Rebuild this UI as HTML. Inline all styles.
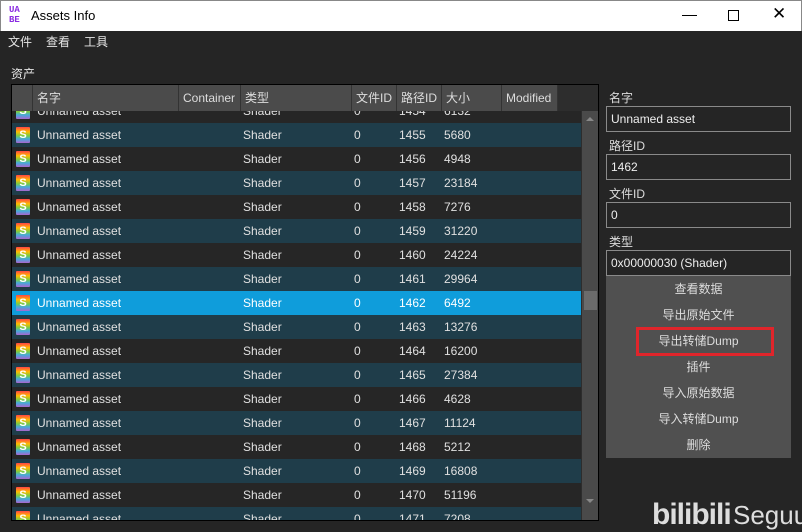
<!DOCTYPE html><html><head><meta charset="utf-8"><style>
*{margin:0;padding:0;box-sizing:border-box}
body{width:802px;height:532px;overflow:hidden;background:#252525;font-family:"Liberation Sans","Noto Sans CJK SC",sans-serif;font-size:12px;color:#e6e6e6;position:relative}
.a{position:absolute}
.title{left:0;top:0;width:802px;height:31px;background:#fff;color:#000;border:1px solid #888;border-bottom:none}
.row{position:absolute;left:0;width:569px;height:24px;line-height:24px}
.row span{position:absolute;top:0}
.ic{position:absolute;left:4px;top:4px;width:14px;height:16px;background:linear-gradient(180deg,#f44 0,#fb0 30%,#7c4 55%,#4ad 75%,#a6c 100%);border-radius:1px;color:#fff;font-weight:bold;font-size:11px;line-height:16px;text-align:center}
.hd{position:absolute;top:0;height:26px;line-height:26px;background:#4b4b4b;border-right:1px solid #333;padding-left:4px;color:#ddd;font-size:12px}
.lbl{position:absolute;left:609px;font-size:12px;color:#ddd}
.in{position:absolute;left:606px;width:185px;height:26px;border:1px solid #8a8a8a;background:#252525;line-height:24px;padding-left:4px;color:#eee}
.btn{position:absolute;left:606px;width:185px;text-align:center;color:#ddd;height:26px;line-height:26px}
</style></head><body>
<div class="a title">
<div class="a" style="left:8px;top:4px;width:14px;height:20px;color:#8a2be2;font-size:9px;line-height:10px;font-family:'Liberation Mono',monospace;font-weight:bold">UA<br>BE</div>
<div class="a" style="left:30px;top:7px;font-size:13px">Assets Info</div>
<div class="a" style="left:681px;top:14px;width:15px;height:1px;background:#000"></div>
<div class="a" style="left:727px;top:9px;width:11px;height:11px;border:1px solid #000"></div>
<div class="a" style="left:771px;top:3px;font-size:17px">&#10005;</div>
</div>
<div class="a" style="left:8px;top:33px;font-size:12px">文件</div>
<div class="a" style="left:46px;top:33px">查看</div>
<div class="a" style="left:84px;top:33px">工具</div>
<div class="a" style="left:11px;top:65px">资产</div>
<div class="a" style="left:11px;top:84px;width:588px;height:437px;border:1px solid #000;background:#2d2d2d;overflow:hidden">
 <div class="a" style="left:0;top:26px;width:570px;height:410px;overflow:hidden">
 <div id="rows"></div>
 </div>
 <div class="hd" style="left:0;width:21px"></div>
 <div class="hd" style="left:21px;width:146px">名字</div>
 <div class="hd" style="left:167px;width:62px">Container</div>
 <div class="hd" style="left:229px;width:111px">类型</div>
 <div class="hd" style="left:340px;width:45px">文件ID</div>
 <div class="hd" style="left:385px;width:45px">路径ID</div>
 <div class="hd" style="left:430px;width:60px">大小</div>
 <div class="hd" style="left:490px;width:56px">Modified</div>
 <div class="a" style="left:570px;top:26px;width:16px;height:410px;background:#4a4a4a"></div>
 <div class="a" style="left:574px;top:32px;border:4px solid transparent;border-bottom:4px solid #888;border-top:none"></div>
 <div class="a" style="left:574px;top:414px;border:4px solid transparent;border-top:4px solid #888;border-bottom:none"></div>
 <div class="a" style="left:572px;top:206px;width:13px;height:19px;background:#6b6b6b"></div>
</div>
<div class="lbl" style="top:89px">名字</div>
<div class="in" style="top:106px">Unnamed asset</div>
<div class="lbl" style="top:137px">路径ID</div>
<div class="in" style="top:154px">1462</div>
<div class="lbl" style="top:185px">文件ID</div>
<div class="in" style="top:202px">0</div>
<div class="lbl" style="top:233px">类型</div>
<div class="in" style="top:250px">0x00000030 (Shader)</div>
<div class="a" style="left:606px;top:276px;width:185px;height:182px;background:#505050"></div>
<div class="btn" style="top:276px">查看数据</div>
<div class="btn" style="top:302px">导出原始文件</div>
<div class="btn" style="top:328px">导出转储Dump</div>
<div class="btn" style="top:354px">插件</div>
<div class="btn" style="top:380px">导入原始数据</div>
<div class="btn" style="top:406px">导入转储Dump</div>
<div class="btn" style="top:432px">删除</div>
<div class="a" style="left:636px;top:327px;width:138px;height:29px;border:3px solid #e0252b"></div>
<div class="a" style="left:652px;top:498px;font-size:30px;font-weight:bold;color:#ddd;letter-spacing:-1px">bilibili</div>
<div class="a" style="left:733px;top:500px;font-size:26px;color:#ddd">Seguu</div>
<script>
var h='',y=-12;
var d=[[1454,6132],[1455,5680],[1456,4948],[1457,23184],[1458,7276],[1459,31220],[1460,24224],[1461,29964],[1462,6492],[1463,13276],[1464,16200],[1465,27384],[1466,4628],[1467,11124],[1468,5212],[1469,16808],[1470,51196],[1471,7208]];
d.forEach(function(r,i){var bg=r[0]==1462?'#0f9ddb':(i%2?'#1f3d4a':'#262626');
h+='<div class="row" style="top:'+(y+i*24)+'px;background:'+bg+';color:'+(r[0]==1462?'#fff':'#e0e0e0')+'"><div class="ic">S</div><span style="left:25px">Unnamed asset</span><span style="left:231px">Shader</span><span style="left:342px">0</span><span style="left:387px">'+r[0]+'</span><span style="left:432px">'+r[1]+'</span></div>';});
document.getElementById('rows').innerHTML=h;
</script>
</body></html>
